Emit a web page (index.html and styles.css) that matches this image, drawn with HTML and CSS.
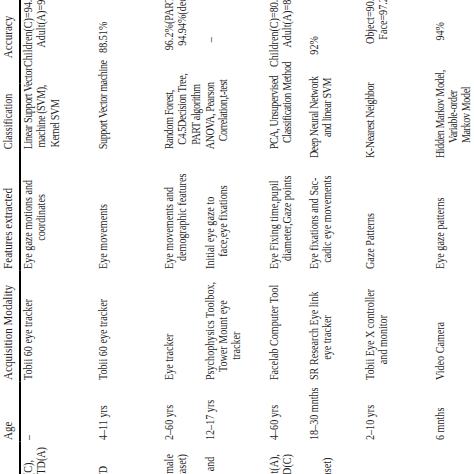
FILE: index.html
```html
<!DOCTYPE html>
<html lang="en">
<head>
<meta charset="utf-8">
<title>Eye tracking studies</title>
<link rel="stylesheet" href="styles.css">
</head>
<body>
<div class="stage">
  <div class="sheet">
    <table class="tbl">
      <colgroup>
        <col class="c-ds"><col class="c-age"><col class="c-acq"><col class="c-feat"><col class="c-cls"><col class="c-acc">
      </colgroup>
      <thead>
        <tr>
          <th class="ds">Dataset</th>
          <th class="age">Age</th>
          <th class="acq">Acquisition Modality</th>
          <th class="feat">Features extracted</th>
          <th class="cls">Classification</th>
          <th class="acc h-acc">Accuracy</th>
        </tr>
      </thead>
      <tbody>
        <tr class="r1">
          <td class="ds"><span class="ln e-in">ASD(C), TD(C),</span><span class="ln e-out">ASD(A), TD(A)</span></td>
          <td class="age"><span class="ln">–</span></td>
          <td class="acq"><span class="ln">Tobii 60 eye tracker</span></td>
          <td class="feat"><span class="ln">Eye gaze motions and</span><span class="ln i28">coordinates</span></td>
          <td class="cls"><span class="ln">Linear Support Vector</span><span class="ln i2">machine (SVM),</span><span class="ln i2">Kernel SVM</span></td>
          <td class="acc a19"><span class="ln">Children(C)=94.44%,</span><span class="ln i19">Adult(A)=98.78%</span></td>
        </tr>
        <tr class="r2">
          <td class="ds short"><span class="ln">ASD, TD</span></td>
          <td class="age"><span class="ln">4–11 yrs</span></td>
          <td class="acq"><span class="ln">Tobii 60 eye tracker</span></td>
          <td class="feat"><span class="ln">Eye movements</span></td>
          <td class="cls"><span class="ln">Support Vector machine</span></td>
          <td class="acc a34"><span class="ln">88.51%</span></td>
        </tr>
        <tr class="r3">
          <td class="ds"><span class="ln">Male, Female</span><span class="ln">(ASD dataset)</span></td>
          <td class="age"><span class="ln">2–60 yrs</span></td>
          <td class="acq"><span class="ln">Eye tracker</span></td>
          <td class="feat"><span class="ln">Eye movements and</span><span class="ln i8">demographic features</span></td>
          <td class="cls"><span class="ln">Random Forest,</span><span class="ln i4">C4.5Decision Tree,</span><span class="ln i4">PART algorithm</span></td>
          <td class="acc a38"><span class="ln">96.2%(PART)</span><span class="ln i4">94.94%(decision tree)</span></td>
        </tr>
        <tr class="r4">
          <td class="ds and"><span class="ln">ASD and</span></td>
          <td class="age"><span class="ln">12–17 yrs</span></td>
          <td class="acq"><span class="ln">Psychophysics Toolbox,</span><span class="ln i8">Tower Mount eye</span><span class="ln i20">tracker</span></td>
          <td class="feat"><span class="ln">Initial eye gaze to</span><span class="ln i12">face,eye fixations</span></td>
          <td class="cls"><span class="ln">ANOVA, Pearson</span><span class="ln i8">Correlation,t-test</span></td>
          <td class="acc a47"><span class="ln">–</span></td>
        </tr>
        <tr class="r5">
          <td class="ds"><span class="ln">Adult(A),</span><span class="ln">ASD(C), TD(C)</span></td>
          <td class="age"><span class="ln">4–60 yrs</span></td>
          <td class="acq"><span class="ln">Facelab Computer Tool</span></td>
          <td class="feat"><span class="ln">Eye Fixing time,pupil</span><span class="ln i8">diameter,Gaze points</span></td>
          <td class="cls"><span class="ln">PCA, Unsupervised</span><span class="ln i6">Classification Method</span></td>
          <td class="acc a19"><span class="ln">Children(C)=80.5%,</span><span class="ln i19">Adult(A)=89.6%</span></td>
        </tr>
        <tr class="r6">
          <td class="ds"><span class="ln e-far">ASD, TD</span><span class="ln e-in">(Saliency dataset)</span></td>
          <td class="age"><span class="ln">18–30 mnths</span></td>
          <td class="acq"><span class="ln">SR Research Eye link</span><span class="ln i20">eye tracker</span></td>
          <td class="feat"><span class="ln">Eye fixations and Sac-</span><span class="ln i6">cadic eye movements</span></td>
          <td class="cls lo"><span class="ln">Deep Neural Network</span><span class="ln i14">and linear SVM</span></td>
          <td class="acc a33"><span class="ln">92%</span></td>
        </tr>
        <tr class="r7">
          <td class="ds far"><span class="ln">ASD</span></td>
          <td class="age"><span class="ln">2–10 yrs</span></td>
          <td class="acq"><span class="ln">Tobii Eye X controller</span><span class="ln i16">and monitor</span></td>
          <td class="feat"><span class="ln">Gaze Patterns</span></td>
          <td class="cls lo"><span class="ln">K-Nearest Neighbor</span></td>
          <td class="acc a45"><span class="ln">Object=90.2%</span><span class="ln i4">Face=97.2%</span></td>
        </tr>
        <tr class="r8">
          <td class="ds far"><span class="ln">ASD</span></td>
          <td class="age"><span class="ln">6 mnths</span></td>
          <td class="acq"><span class="ln">Video Camera</span></td>
          <td class="feat"><span class="ln">Eye gaze patterns</span></td>
          <td class="cls lo"><span class="ln">Hidden Markov Model,</span><span class="ln i8">Variable-order</span><span class="ln i8">Markov Model</span></td>
          <td class="acc a49"><span class="ln">94%</span></td>
        </tr>
      </tbody>
    </table>
  </div>
</div>
</body>
</html>
```

FILE: styles.css
```css
html, body {
  margin: 0;
  padding: 0;
  background: #ffffff;
}

.stage {
  width: 474px;
  height: 474px;
  overflow: hidden;
  background: #ffffff;
}

/* The printed table is turned a quarter turn and is a little narrower
   along its rows than along its columns (as in the scanned page). */
.sheet {
  width: 540px;
  height: 474px;
  transform-origin: 0 0;
  transform: translateY(474px) rotate(-90deg) scaleX(0.88);
}

.tbl {
  border-collapse: separate;
  border-spacing: 0;
  table-layout: fixed;
  width: 657px;
  margin-left: -63.4px;
  font-family: "Liberation Serif", "Times New Roman", serif;
  font-size: 11.5px;
  line-height: 13.3px;
  color: #1f1f1f;
}

.c-ds { width: 100px; }
.c-age { width: 68.2px; }
.c-acq { width: 126.2px; }
.c-feat { width: 136px; }
.c-cls { width: 76.5px; }
.c-acc { width: 150px; }

th, td {
  padding: 1px 0 0 2px;
  text-align: left;
  vertical-align: top;
  white-space: nowrap;
  font-weight: normal;
}

thead th {
  padding-top: 2px;
  padding-bottom: 3.7px;
  border-bottom: 2px solid #000000;
  font-size: 12.6px;
}

thead th.cls { font-size: 11.5px; }

.ln {
  display: block;
}

/* first column is cut by the page edge */
th.ds { padding-left: 0; }
td.ds {
  text-align: right;
  padding-left: 0;
  padding-right: 14px;
}
td.ds.short { padding-right: 27.6px; }
td.ds.and { padding-right: 17px; }
td.ds.far { padding-right: 70px; }
.ds .e-in { margin-right: 6.7px; }
.ds .e-out { margin-right: -8px; }
.ds .e-far { margin-right: 60px; }

td.cls { letter-spacing: -0.45px; }
td.cls.lo { padding-left: 0; }
td.cls.lo .ln:first-child { margin-left: -8px; }
th.h-acc { padding-left: 29px; }

/* continuation-line indents */
.i2 { padding-left: 2px; }
.i4 { padding-left: 5px; }
.i6 { padding-left: 7px; }
.i8 { padding-left: 9px; }
.i12 { padding-left: 14px; }
.i14 { padding-left: 16px; }
.i16 { padding-left: 18px; }
.i19 { padding-left: 22px; }
.i20 { padding-left: 23px; }
.i28 { padding-left: 32px; }

/* accuracy values sit at varying offsets in the printed table */
td.a19 { padding-left: 19px; }
td.a33 { padding-left: 33px; }
td.a34 { padding-left: 35px; }
td.a38 { padding-left: 38px; }
td.a45 { padding-left: 45px; }
td.a47 { padding-left: 47px; }
td.a49 { padding-left: 49px; }

.r1 { height: 75px; }
.r2 { height: 66px; }
.r3 { height: 40px; }
.r4 { height: 64px; }
.r5 { height: 40px; }
.r6 { height: 56px; }
.r7 { height: 70px; }
.r8 { height: 60px; }
```
